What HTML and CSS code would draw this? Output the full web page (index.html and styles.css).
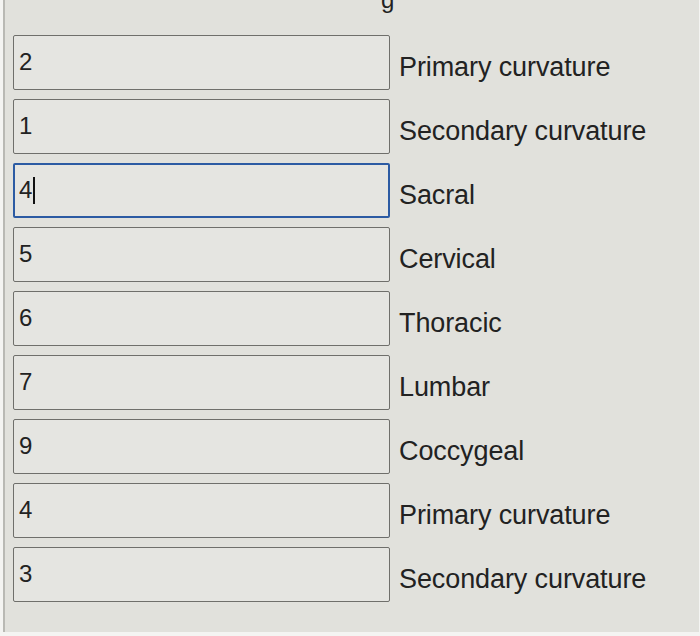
FILE: index.html
```html
<!DOCTYPE html>
<html>
<head>
<meta charset="utf-8">
<link rel="stylesheet" href="styles.css">
</head>
<body>
<div class="page">
  <div class="cut-heading">g</div>
  <div class="rows">
    <div class="row"><div class="box">2</div><div class="label">Primary curvature</div></div>
    <div class="row"><div class="box">1</div><div class="label">Secondary curvature</div></div>
    <div class="row"><div class="box focus">4<span class="caret"></span></div><div class="label">Sacral</div></div>
    <div class="row"><div class="box">5</div><div class="label">Cervical</div></div>
    <div class="row"><div class="box">6</div><div class="label">Thoracic</div></div>
    <div class="row"><div class="box">7</div><div class="label">Lumbar</div></div>
    <div class="row"><div class="box">9</div><div class="label">Coccygeal</div></div>
    <div class="row"><div class="box">4</div><div class="label">Primary curvature</div></div>
    <div class="row"><div class="box">3</div><div class="label">Secondary curvature</div></div>
  </div>
</div>
</body>
</html>
```

FILE: styles.css
```css
html, body {
  margin: 0;
  padding: 0;
  width: 700px;
  height: 636px;
  overflow: hidden;
  background: #f4f4f2;
}
.page {
  width: 696px;
  height: 632px;
  margin-left: 3px;
  border-left: 2px solid #b9b9b4;
  background: #e1e1dc;
  font-family: "Liberation Sans", Arial, sans-serif;
  color: #222;
  overflow: hidden;
  box-sizing: border-box;
}
.cut-heading {
  height: 6px;
  margin-left: 376px;
  font-size: 24px;
  line-height: 0;
  color: #222;
}
.rows {
  display: flex;
  flex-direction: column;
  gap: 9px;
  padding-top: 29px;
  padding-left: 8px;
}
.row {
  display: flex;
  align-items: center;
  gap: 9px;
}
.box {
  width: 377px;
  height: 55px;
  box-sizing: border-box;
  border: 1.5px solid #6f6f6b;
  border-radius: 2px;
  background: #e5e5e1;
  font-size: 24px;
  line-height: 24px;
  padding: 0 0 1px 5px;
  display: flex;
  align-items: center;
}
.box.focus {
  border: 2.5px solid #2c5ba3;
  padding-left: 4px;
}
.caret {
  display: inline-block;
  width: 1.5px;
  height: 27px;
  margin-left: 1px;
  background: #111;
}
.label {
  font-size: 27px;
  padding-top: 10px;
  letter-spacing: -0.1px;
}
```
